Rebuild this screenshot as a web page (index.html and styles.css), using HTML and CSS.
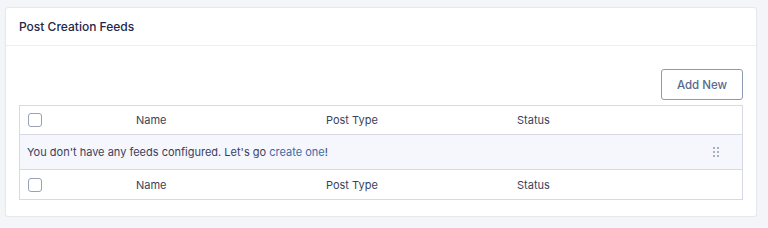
FILE: index.html
```html
<!DOCTYPE html>
<html>
<head>
<meta charset="utf-8">
<link rel="stylesheet" href="styles.css">
</head>
<body>
<div class="card">
  <div class="card-header">Post Creation Feeds</div>
  <div class="card-body">
    <div class="actions"><button class="btn">Add New</button></div>
    <div class="table">
      <div class="row head">
        <div class="cell cb"><span class="checkbox"></span></div>
        <div class="cell">Name</div>
        <div class="cell">Post Type</div>
        <div class="cell">Status</div>
        <div class="cell"></div>
      </div>
      <div class="row empty">
        <div class="msg">You don't have any feeds configured. Let's go <a href="#">create one</a>!</div>
        <div class="drag">
          <svg width="6" height="10" viewBox="0 0 6 10"><g fill="#a9afc4"><rect x="0" y="0" width="2" height="2"/><rect x="4" y="0" width="2" height="2"/><rect x="0" y="4" width="2" height="2"/><rect x="4" y="4" width="2" height="2"/><rect x="0" y="8" width="2" height="2"/><rect x="4" y="8" width="2" height="2"/></g></svg>
        </div>
      </div>
      <div class="row foot">
        <div class="cell cb"><span class="checkbox"></span></div>
        <div class="cell">Name</div>
        <div class="cell">Post Type</div>
        <div class="cell">Status</div>
        <div class="cell"></div>
      </div>
    </div>
  </div>
</div>
</body>
</html>
```
FILE: styles.css
```css
html, body {
  margin: 0;
  padding: 0;
}
body {
  background: #f3f5f9;
  font-family: Inter, "Noto Sans", sans-serif;
  color: #242748;
  padding: 7px 11px 0 5px;
}
.card {
  background: #ffffff;
  border: 1px solid #e6e8ef;
  border-radius: 3px;
  box-shadow: 0 1px 2px rgba(40, 50, 80, 0.04);
  height: 210px;
  box-sizing: border-box;
}
.card-header {
  height: 38px;
  box-sizing: border-box;
  border-bottom: 1px solid #eceef5;
  padding: 0 13px;
  display: flex;
  align-items: center;
  font-size: 12px;
  font-weight: 500;
  color: #242748;
}
.card-body {
  padding: 23px 13px 0 13px;
}
.actions {
  display: flex;
  justify-content: flex-end;
  margin-bottom: 5px;
}
.btn {
  height: 31px;
  width: 82px;
  background: #ffffff;
  border: 1px solid #8d98b1;
  border-radius: 3px;
  color: #5a6a8b;
  font-family: Inter, "Noto Sans", sans-serif;
  font-size: 11.5px;
  font-weight: 500;
  padding: 0;
}
.table {
  border: 1px solid #d7d9e6;
  font-size: 11px;
  color: #3a3f5c;
}
.row {
  display: grid;
  grid-template-columns: 107px 190px 191px 1fr 40px;
  align-items: center;
}
.row.head {
  height: 28px;
  border-bottom: 1px solid #d7d9e6;
}
.row.foot {
  height: 29px;
}
.cell {
  padding-left: 9px;
}
.cell.cb {
  padding-left: 8px;
  display: flex;
  align-items: center;
}
.checkbox {
  display: inline-block;
  width: 12px;
  height: 12px;
  border: 1px solid #9aa1b4;
  border-radius: 3px;
  background: #fff;
}
.row.empty {
  display: flex;
  justify-content: space-between;
  align-items: center;
  height: 34px;
  background: #f5f7fc;
  border-bottom: 1px solid #d7d9e6;
  padding: 0 23px 0 7px;
}
.msg a {
  color: #3c6aa6;
  text-decoration: none;
}
.drag {
  display: flex;
  align-items: center;
}
.drag svg {
  display: block;
}
```
